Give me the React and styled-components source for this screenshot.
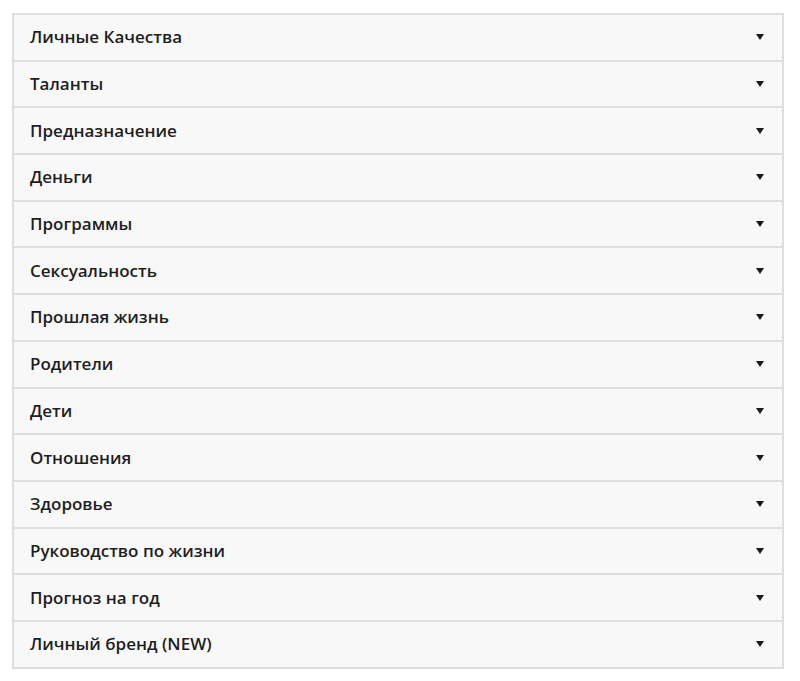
import React from "react";
import styled, { createGlobalStyle } from "styled-components";

const GlobalStyle = createGlobalStyle`
  html, body {
    margin: 0;
    padding: 0;
    background: #ffffff;
  }
  body {
    font-family: "Open Sans", "Noto Sans", "Liberation Sans", sans-serif;
  }
`;

const ITEMS = [
  "Личные Качества",
  "Таланты",
  "Предназначение",
  "Деньги",
  "Программы",
  "Сексуальность",
  "Прошлая жизнь",
  "Родители",
  "Дети",
  "Отношения",
  "Здоровье",
  "Руководство по жизни",
  "Прогноз на год",
  "Личный бренд (NEW)",
];

const Page = styled.div`
  padding: 13px 16px 0 12px;
`;

const List = styled.div`
  display: flex;
  flex-direction: column;
  border: 2px solid #dedede;
  border-bottom: none;
  background: #f8f8f8;
`;

const Row = styled.div`
  display: flex;
  align-items: center;
  justify-content: space-between;
  box-sizing: border-box;
  height: 46.7px;
  padding: 0 16px 0 16px;
  border-bottom: 2px solid #dedede;
  color: #1e1e1e;
  font-size: 17px;
  font-weight: 600;
  cursor: pointer;
`;

const Label = styled.span`
  margin-top: -1px;
`;

const Caret = styled.span`
  width: 0;
  height: 0;
  margin-right: 2px;
  border-left: 4.5px solid transparent;
  border-right: 4.5px solid transparent;
  border-top: 6px solid #1a1a1a;
`;

export default function App() {
  return (
    <>
      <GlobalStyle />
      <Page>
        <List>
          {ITEMS.map((item) => (
            <Row key={item}>
              <Label>{item}</Label>
              <Caret />
            </Row>
          ))}
        </List>
      </Page>
    </>
  );
}
